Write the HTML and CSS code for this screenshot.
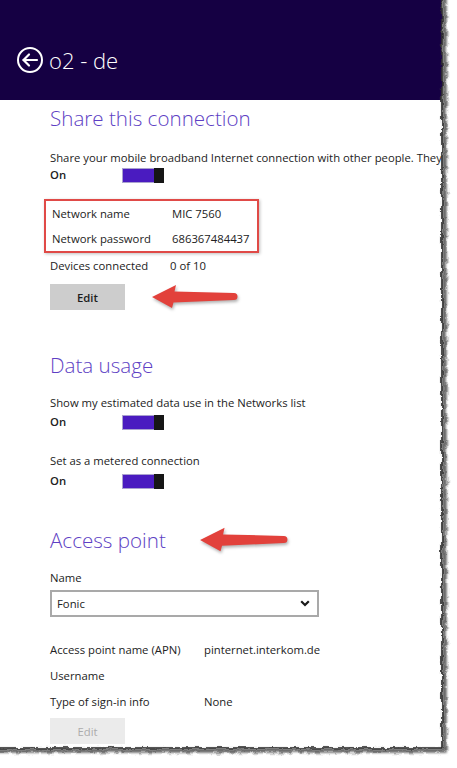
FILE: index.html
```html
<!DOCTYPE html>
<html lang="en">
<head>
<meta charset="utf-8">
<title>o2 - de</title>
<link rel="stylesheet" href="styles.css">
</head>
<body>
<div class="frame">
  <div class="sheet">
    <header class="topbar">
      <svg class="back" width="28" height="28" viewBox="0 0 28 28" aria-hidden="true">
        <circle cx="14" cy="14" r="12" fill="none" stroke="#fff" stroke-width="2"/>
        <path d="M7.5,14 H21" fill="none" stroke="#fff" stroke-width="2.2" stroke-linecap="round"/>
        <path d="M13,8.5 L7.5,14 L13,19.5" fill="none" stroke="#fff" stroke-width="2.2" stroke-linecap="round" stroke-linejoin="round"/>
      </svg>
      <h1 class="title">o2 - de</h1>
    </header>

    <main class="content">
      <section class="section share">
        <h2 class="heading">Share this connection</h2>
        <p class="desc">Share your mobile broadband Internet connection with other people. They'll be able to connect to it.</p>
        <div class="switch-row">
          <span class="state">On</span>
          <span class="toggle"><span class="track"></span><span class="thumb"></span></span>
        </div>
        <div class="highlight">
          <div class="kv"><span class="k">Network name</span><span class="v">MIC 7560</span></div>
          <div class="kv"><span class="k">Network password</span><span class="v">686367484437</span></div>
        </div>
        <div class="kv tall"><span class="k">Devices connected</span><span class="v">0 of 10</span></div>
        <div class="btn-row">
          <button class="btn">Edit</button>
          <svg class="arrow arrow-1" width="90" height="28" viewBox="0 0 90 28" aria-hidden="true">
            <path d="M2,14 L26,2 L24.5,8.6 L84,10 A3.5,3.5 0 0 1 84,17 L23.5,19.6 L22,25 Z" fill="#e2413b"/>
          </svg>
        </div>
      </section>

      <section class="section data">
        <h2 class="heading">Data usage</h2>
        <p class="desc">Show my estimated data use in the Networks list</p>
        <div class="switch-row">
          <span class="state">On</span>
          <span class="toggle"><span class="track"></span><span class="thumb"></span></span>
        </div>
        <p class="desc desc-gap">Set as a metered connection</p>
        <div class="switch-row">
          <span class="state">On</span>
          <span class="toggle"><span class="track"></span><span class="thumb"></span></span>
        </div>
      </section>

      <section class="section apn">
        <div class="heading-row">
          <h2 class="heading">Access point</h2>
          <svg class="arrow arrow-2" width="92" height="30" viewBox="0 0 90 28" aria-hidden="true">
            <path d="M2,14 L26,2 L24.5,8.6 L84,10 A3.5,3.5 0 0 1 84,17 L23.5,19.6 L22,25 Z" fill="#e2413b"/>
          </svg>
        </div>
        <p class="label">Name</p>
        <div class="select">
          <span class="select-value">Fonic</span>
          <svg class="chevron" width="10" height="7" viewBox="0 0 10 7" aria-hidden="true">
            <path d="M1.2,1.2 L5,5 L8.8,1.2" fill="none" stroke="#1a1a1a" stroke-width="2.2"/>
          </svg>
        </div>
        <div class="apn-list">
          <div class="kv tall wide"><span class="k">Access point name (APN)</span><span class="v">pinternet.interkom.de</span></div>
          <div class="kv tall wide"><span class="k">Username</span><span class="v"></span></div>
          <div class="kv tall wide"><span class="k">Type of sign-in info</span><span class="v">None</span></div>
        </div>
        <button class="btn btn-disabled" disabled>Edit</button>
      </section>
    </main>
  </div>

  <svg class="torn" width="457" height="768" viewBox="0 0 457 768" aria-hidden="true">
    <defs>
      <filter id="rough" filterUnits="userSpaceOnUse" x="-40" y="-40" width="540" height="860">
        <feTurbulence type="fractalNoise" baseFrequency="0.13" numOctaves="3" seed="7" result="noise"/>
        <feDisplacementMap in="SourceGraphic" in2="noise" scale="5" xChannelSelector="R" yChannelSelector="G"/>
      </filter>
      <filter id="soft" filterUnits="userSpaceOnUse" x="-40" y="-40" width="540" height="860">
        <feGaussianBlur stdDeviation="1.3"/>
      </filter>
    </defs>
    <g filter="url(#rough)">
      <path d="M442,-30 V748 H-30 V810 H520 V-30 Z" fill="#fff"/>
      <path d="M444.5,-30 V750.5 H-30" fill="none" stroke="#666" stroke-width="4.5" filter="url(#soft)"/>
      <path d="M442,-30 V748 H-30" fill="none" stroke="#2a2a2a" stroke-width="1.6"/>
    </g>
  </svg>
</div>
</body>
</html>
```

FILE: styles.css
```css
* {
  box-sizing: border-box;
  margin: 0;
  padding: 0;
}

body {
  margin: 0;
  background: #fff;
  font-family: "Open Sans", "Noto Sans", sans-serif;
  color: #222;
}

.frame {
  position: relative;
  width: 457px;
  height: 768px;
  overflow: hidden;
  background: #fff;
}

.sheet {
  width: 447px;
  height: 760px;
  overflow: hidden;
  background: #fff;
}

/* header */
.topbar {
  height: 100px;
  background: #150043;
  display: flex;
  align-items: flex-start;
  gap: 5px;
  padding: 46px 0 0 16px;
}

.back {
  flex: none;
  display: block;
}

.title {
  font-size: 22px;
  font-weight: 300;
  line-height: 28px;
  color: #fff;
}

/* content */
.content {
  padding: 4px 0 0 50px;
}

.heading {
  font-size: 20.6px;
  font-weight: 300;
  line-height: 28px;
  color: #5e3fc4;
}

.desc,
.label,
.kv,
.btn,
.state,
.select-value {
  font-size: 11.3px;
}

.desc {
  line-height: 16px;
  white-space: nowrap;
  margin-top: 16px;
}

.share .desc {
  margin-top: 18px;
}

.desc-gap {
  margin-top: 23px;
}

.switch-row {
  display: flex;
  align-items: center;
  height: 16px;
  margin-top: 3px;
}

.share .switch-row {
  margin-top: 1px;
}

.data .desc-gap + .switch-row {
  margin-top: 4px;
}

.state {
  width: 72px;
  font-weight: 600;
  line-height: 16px;
}

.toggle {
  display: flex;
  width: 42px;
  height: 15px;
}

.track {
  flex: 1;
  background: #4a1bc0;
  border: 1px solid #aaa2cf;
  border-right: none;
}

.thumb {
  width: 10px;
  background: #161616;
}

/* key / value rows */
.kv {
  display: flex;
  line-height: 25px;
  white-space: nowrap;
}

.kv.tall {
  line-height: 26px;
}

.k {
  width: 120px;
  flex: none;
}

.wide .k {
  width: 154px;
}

.highlight {
  width: 215px;
  margin: 16px 0 0 -6px;
  padding-left: 6px;
  border: 2px solid #e04a47;
  box-shadow: 1px 1px 3px rgba(0, 0, 0, 0.25);
}

/* buttons */
.btn-row {
  display: flex;
  align-items: center;
  margin-top: 4px;
}

.btn {
  display: block;
  width: 75px;
  height: 26px;
  border: none;
  background: #cdcdcd;
  color: #1c1c1c;
  font-family: inherit;
  font-weight: 600;
}

.btn-disabled {
  margin-top: 3px;
  background: #ebebeb;
  color: #ababab;
  font-weight: 400;
}

.arrow {
  flex: none;
  display: block;
  filter: drop-shadow(1px 2px 1.5px rgba(0, 0, 0, 0.3));
}

.arrow-1 {
  margin-left: 25px;
}

/* data usage */
.data {
  margin-top: 40px;
}

/* access point */
.apn {
  margin-top: 37px;
}

.heading-row {
  display: flex;
  align-items: center;
  height: 28px;
}

.arrow-2 {
  margin-left: 32px;
}

.label {
  line-height: 16px;
  margin-top: 16px;
}

.select {
  display: flex;
  align-items: center;
  justify-content: space-between;
  width: 269px;
  height: 27px;
  margin-top: 4px;
  padding: 0 7px 0 5px;
  border: 2px solid #a9a9a9;
  background: #fff;
}

.select-value {
  line-height: 23px;
}

.chevron {
  display: block;
}

.apn-list {
  margin-top: 20px;
}

/* torn paper edge overlay */
.torn {
  position: absolute;
  top: 0;
  left: 0;
  pointer-events: none;
}
```
